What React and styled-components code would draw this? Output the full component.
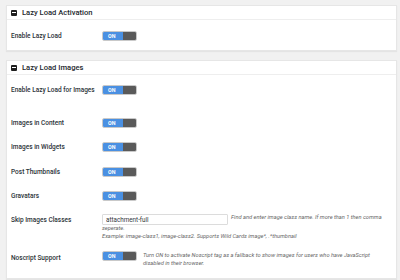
import React from 'react';
import styled, { createGlobalStyle } from 'styled-components';

const Global = createGlobalStyle`
    body {
        margin: 0;
        background: #f1f1f1;
        font-family: Roboto, "Liberation Sans", sans-serif;
        color: #23282d;
    }
`;

const Page = styled.div`
    width: 400px;
    height: 280px;
    padding: 5px 3px 0 6px;
    box-sizing: border-box;
    overflow: hidden;
`;

const Panel = styled.section`
    background: #fff;
    border: 1px solid #e6e6e6;
    box-shadow: 0 1px 1px rgba(0, 0, 0, 0.05);
    margin-bottom: 9px;
`;

const PanelHeader = styled.div`
    height: 13px;
    display: flex;
    align-items: center;
    padding-left: 4px;
    border-bottom: 1px solid #eee;

    h2 {
        margin: 0;
        font-size: 7.6px;
        font-weight: 500;
        color: #23282d;
    }
`;

const Collapse = styled.span`
    width: 6px;
    height: 6px;
    border-radius: 1px;
    background: #1e1e1e;
    margin-right: 5px;
    display: flex;
    align-items: center;
    justify-content: center;

    &::after {
        content: "";
        width: 4px;
        height: 1px;
        background: #fff;
    }
`;

const Body = styled.div`
    padding: ${props => props.pad || "0"} 0 ${props => props.padBottom || "0"} 4px;
`;

const Row = styled.div`
    display: flex;
    align-items: flex-start;
    padding: ${props => props.py || "7px"} 0;
    margin-bottom: ${props => props.after || "0"};
`;

const Label = styled.div`
    width: 91px;
    flex-shrink: 0;
    font-size: 6.5px;
    font-weight: 500;
    line-height: 10px;
    color: #2c3338;
    margin-top: ${props => props.shift || "0"};
`;

const Field = styled.div`
    flex: 1;
    display: flex;
    align-items: flex-start;
`;

const Toggle = styled.div`
    width: 35px;
    height: 10px;
    box-sizing: border-box;
    border: 1px solid #c9c9c9;
    border-radius: 2px;
    display: flex;
    overflow: hidden;
    flex-shrink: 0;

    span {
        width: 20px;
        background: #4a90e2;
        color: #fff;
        font-size: 5.3px;
        font-weight: 700;
        line-height: 8px;
        padding-left: 5px;
        box-sizing: border-box;
    }
    i {
        flex: 1;
        background: #5a5a5a;
    }
`;

const TextInput = styled.input`
    width: 126px;
    height: 11px;
    box-sizing: border-box;
    border: 1px solid #dcdcdc;
    border-radius: 1px;
    padding: 0 3px;
    font-family: inherit;
    font-size: 6.3px;
    color: #32373c;
    vertical-align: top;
    outline: none;
`;

const Desc = styled.div`
    font-size: 5.7px;
    font-style: italic;
    color: #666;
    line-height: 8px;
    width: ${props => props.w || "auto"};
    margin-left: ${props => props.ml || "0"};
`;

const InlineField = styled.div`
    width: 290px;
    font-size: 5.7px;
    font-style: italic;
    color: #666;
    line-height: 7.5px;

    em {
        margin-left: 3px;
        font-style: italic;
    }
`;

const OnSwitch = () => (
    <Toggle>
        <span>ON</span>
        <i />
    </Toggle>
);

const SwitchRow = ({ label, py, after }) => (
    <Row py={py} after={after}>
        <Label>{label}</Label>
        <Field>
            <OnSwitch />
        </Field>
    </Row>
);

const App = () => {
    return (
        <Page>
            <Global />
            <Panel>
                <PanelHeader>
                    <Collapse />
                    <h2>Lazy Load Activation</h2>
                </PanelHeader>
                <Body pad="4px" padBottom="2px">
                    <SwitchRow label="Enable Lazy Load" py="7px" />
                </Body>
            </Panel>
            <Panel>
                <PanelHeader>
                    <Collapse />
                    <h2>Lazy Load Images</h2>
                </PanelHeader>
                <Body pad="3px" padBottom="6px">
                    <SwitchRow label="Enable Lazy Load for Images" after="9px" />
                    <SwitchRow label="Images in Content" py="7px" />
                    <SwitchRow label="Images in Widgets" py="7.25px" />
                    <SwitchRow label="Post Thumbnails" py="7.25px" />
                    <SwitchRow label="Gravatars" py="7px" />
                    <Row py="6px">
                        <Label shift="1px">Skip Images Classes</Label>
                        <InlineField>
                            <TextInput defaultValue="attachment-full" />
                            <em>Find and enter image class name. If more than 1 then comma seperate.</em>
                            <br />
                            Example: image-class1, image-class2. Supports Wild Cards image*, .*thumbnail
                        </InlineField>
                    </Row>
                    <Row py="5px">
                        <Label shift="2px">Noscript Support</Label>
                        <Field>
                            <OnSwitch />
                            <Desc ml="6px" w="240px">
                                Turn ON to activate Noscript tag as a fallback to show images for users who have JavaScript disabled in their browser.
                            </Desc>
                        </Field>
                    </Row>
                </Body>
            </Panel>
        </Page>
    );
};

export default App;
